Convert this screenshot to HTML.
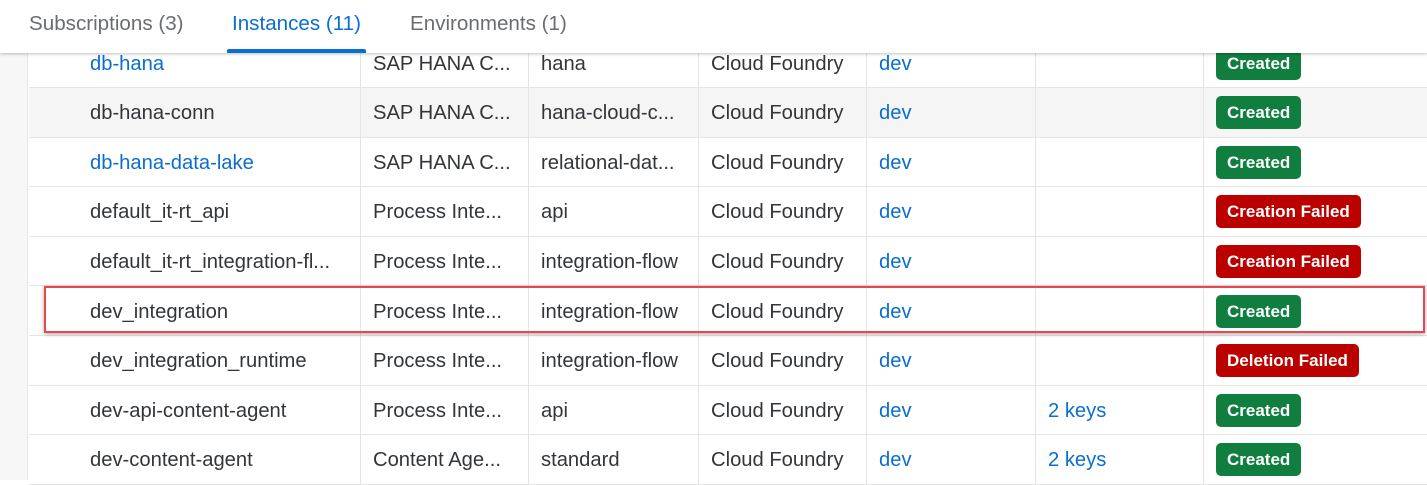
<!DOCTYPE html>
<html><head><style>
*{margin:0;padding:0;box-sizing:border-box}
body{width:1427px;height:480px;overflow:hidden;background:#fff;font-family:"Liberation Sans",Arial,sans-serif;color:#32363a;position:relative}
.strip{position:absolute;left:0;top:0;width:28px;height:480px;background:#f7f7f7;border-right:1px solid #e5e5e5}
.row{position:absolute;left:29px;width:1398px;height:49.5px;border-bottom:1px solid #e5e5e5;font-size:20.2px}
.row.hov{background:#f5f5f5}
.c{position:absolute;top:0;height:100%;line-height:51px;white-space:nowrap;overflow:hidden;border-left:1px solid #e5e5e5}
.c.first{border-left:none}
a{color:#0a6ed1;text-decoration:none}
.b{position:absolute;top:8px;left:12px;height:33px;line-height:33px;padding:0 11px;border-radius:5px;color:#fff;font-weight:bold;font-size:17px}
.g{background:#107e3e}.r{background:#bb0000}
.hdr{position:absolute;left:0;top:0;width:1427px;height:53px;background:#fff;box-shadow:0 1px 3px rgba(0,0,0,.25);z-index:5;font-size:20.6px}
.tab{position:absolute;top:12px;color:#6a6d70}
.tab.act{color:#0a6ed1}
.ul{position:absolute;left:227px;top:49px;width:139px;height:4px;background:#0a6ed1;border-radius:2px 2px 0 0}
.hl{position:absolute;left:44px;top:286px;width:1381px;height:47px;border:2px solid #e8474f;box-shadow:0 1px 4px rgba(0,0,0,.35);z-index:4}
</style></head><body>
<div class="strip"></div>
<div class="hdr">
<span class="tab" style="left:29px">Subscriptions (3)</span>
<span class="tab act" style="left:232px">Instances (11)</span>
<span class="tab" style="left:410px">Environments (1)</span>
<div class="ul"></div>
</div>
<div id="t"></div>
<div class="hl"></div>
<script>
var rows=[
["db-hana",1,"SAP HANA C...","hana","","g","Created",0],
["db-hana-conn",0,"SAP HANA C...","hana-cloud-c...","","g","Created",1],
["db-hana-data-lake",1,"SAP HANA C...","relational-dat...","","g","Created",0],
["default_it-rt_api",0,"Process Inte...","api","","r","Creation Failed",0],
["default_it-rt_integration-fl...",0,"Process Inte...","integration-flow","","r","Creation Failed",0],
["dev_integration",0,"Process Inte...","integration-flow","","g","Created",0],
["dev_integration_runtime",0,"Process Inte...","integration-flow","","r","Deletion Failed",0],
["dev-api-content-agent",0,"Process Inte...","api","2 keys","g","Created",0],
["dev-content-agent",0,"Content Age...","standard","2 keys","g","Created",0]];
var cols=[0,331,499,669,837,1006,1174,1398];
var h="";
rows.forEach(function(r,i){
var top=38.5+i*49.6;
h+='<div class="row'+(r[7]?' hov':'')+'" style="top:'+top+'px">';
var cells=[r[1]?'<a>'+r[0]+'</a>':r[0],r[2],r[3],'Cloud Foundry','<a>dev</a>',r[4]?'<a>'+r[4]+'</a>':'',''];
for(var k=0;k<7;k++){
var pad=k==0?61:12;
h+='<div class="c'+(k==0?' first':'')+'" style="left:'+cols[k]+'px;width:'+(cols[k+1]-cols[k])+'px;padding-left:'+pad+'px">';
if(k==6)h+='<span class="b '+r[5]+'">'+r[6]+'</span>';else h+=cells[k];
h+='</div>';}
h+='</div>';});
document.getElementById('t').innerHTML=h;
</script>
</body></html>
